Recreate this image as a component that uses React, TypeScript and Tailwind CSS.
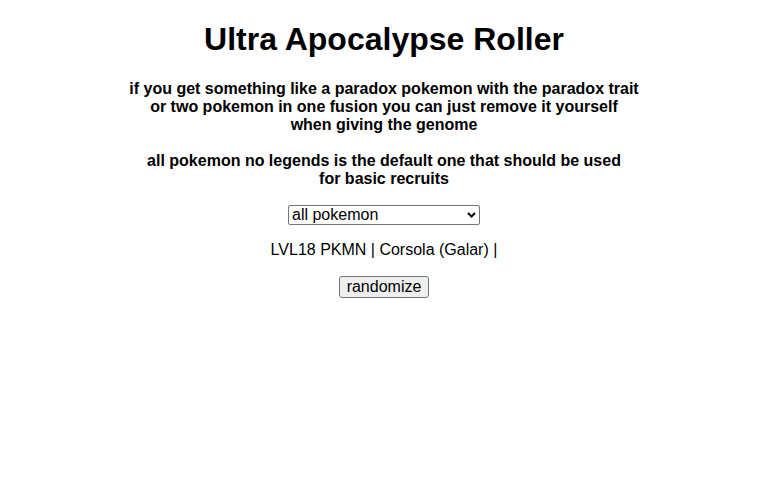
import React, { useState } from "react";

const pools = [
  "all pokemon",
  "all pokemon no legends",
  "legends only",
  "paradox only",
];

export default function App() {
  const [pool, setPool] = useState(pools[0]);

  return (
    <div
      className="flex flex-col items-center bg-white px-2 text-black"
      style={{ fontFamily: '"Liberation Sans", Arial, sans-serif' }}
    >
      <h1 className="mt-[21px] text-[32px] font-bold leading-[37px]">
        Ultra Apocalypse Roller
      </h1>

      <h4 className="mt-[21.5px] text-center text-[16px] font-bold leading-[18px]">
        if you get something like a paradox pokemon with the paradox trait
        <br />
        or two pokemon in one fusion you can just remove it yourself
        <br />
        when giving the genome
        <br />
        <br />
        all pokemon no legends is the default one that should be used
        <br />
        for basic recruits
      </h4>

      <div className="relative mt-[17px] h-[20px] w-[192px]">
        <select
          value={pool}
          onChange={(e) => setPool(e.target.value)}
          className="block h-[20px] w-full appearance-none rounded-[2px] border border-[#767676] bg-white py-0 pl-[3px] pr-5 text-[16px] leading-[18px] text-black"
        >
          {pools.map((p) => (
            <option key={p} value={p}>
              {p}
            </option>
          ))}
        </select>
        <svg
          className="pointer-events-none absolute right-[4px] top-[7px]"
          width="9"
          height="6"
          viewBox="0 0 9 6"
        >
          <path
            d="M1 1 L4.5 4.5 L8 1"
            fill="none"
            stroke="#000"
            strokeWidth="2"
          />
        </svg>
      </div>

      <p className="mt-[16px] text-[16px] leading-[18px]">
        LVL18 PKMN | Corsola (Galar) |
      </p>

      <button className="mt-[17px] h-[22px] rounded-[3px] border border-[#767676] bg-[#efefef] px-[7px] text-[16px] leading-[18px] text-black">
        randomize
      </button>
    </div>
  );
}
